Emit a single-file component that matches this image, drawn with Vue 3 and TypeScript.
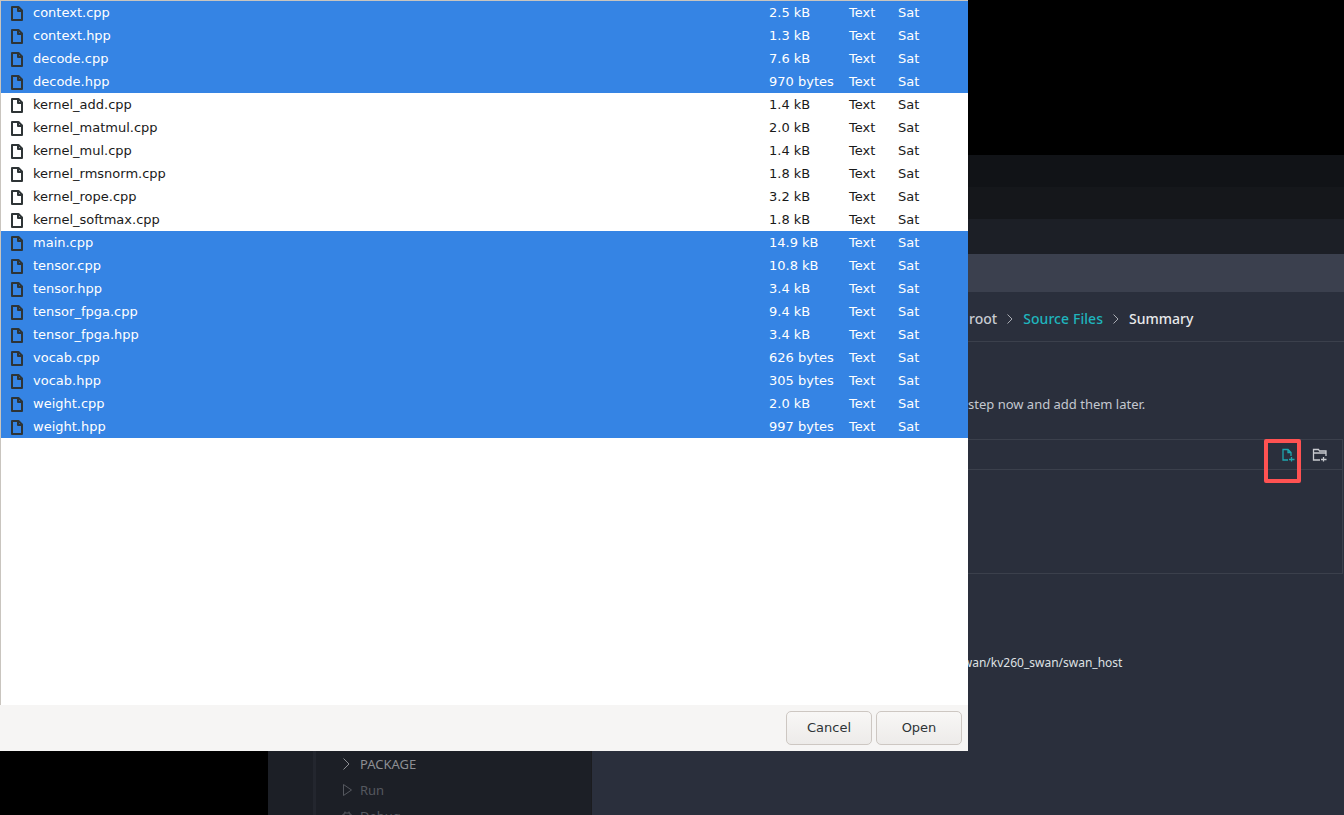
<template>
  <div class="desktop">
    <div class="ide">
      <div class="bar bar-title"></div>
      <div class="bar bar-menu"></div>
      <div class="bar bar-tabs"></div>
      <div class="bar bar-active"></div>
      <div class="ide-body">
        <aside class="sidebar">
          <div class="rail"></div>
          <div class="tree">
            <div class="tree-row heading">
              <svg width="14" height="14" viewBox="0 0 14 14" fill="none" stroke="currentColor" stroke-width="1">
                <path d="M3.500 1.500 9 7l-5.500 5.500" />
              </svg>
              PACKAGE
            </div>
            <div class="tree-row muted">
              <svg width="14" height="14" viewBox="0 0 14 14" fill="none" stroke="currentColor" stroke-width="1">
                <path d="M3.500 1.500 11.500 7l-8 5.500z" />
              </svg>
              Run
            </div>
            <div class="tree-row muted">
              <svg width="14" height="14" viewBox="0 0 14 14" fill="none" stroke="currentColor" stroke-width="1">
                <path d="M4 4h6v6a3 3 0 0 1-6 0zM5 4V2.500M9 4V2.500M2 6h2M10 6h2" />
              </svg>
              Debug
            </div>
          </div>
        </aside>
        <main class="main">
          <nav class="crumbs">
            <span>root</span>
            <svg class="chev" width="12" height="12" viewBox="0 0 12 12" fill="none" stroke="currentColor">
              <path d="M3.500 1.500 8 6l-4.500 4.500" />
            </svg>
            <span class="crumb-on">Source Files</span>
            <svg class="chev" width="12" height="12" viewBox="0 0 12 12" fill="none" stroke="currentColor">
              <path d="M3.500 1.500 8 6l-4.500 4.500" />
            </svg>
            <span class="crumb-last">Summary</span>
          </nav>
          <section class="content">
            <p class="hint">step now and add them later.</p>
            <div class="files-box">
              <div class="files-head">
                <span class="icon-btn teal">
                  <svg width="16" height="16" viewBox="0 0 16 16" fill="none" stroke="currentColor" stroke-width="1.300">
                    <path d="M8 13H3V2.500h5l3 3V9M8 2.500v3h3M11.500 10v4.500M9 12.500h5.500" />
                  </svg>
                </span>
                <span class="icon-btn">
                  <svg width="16" height="16" viewBox="0 0 16 16" fill="none" stroke="currentColor" stroke-width="1.300">
                    <path d="M8 13H1.500V2.500h5l1 1.500h6.500v5M1.500 6h12.500M11.500 10v4.500M9 12.500h5.500" />
                  </svg>
                </span>
              </div>
            </div>
            <p class="path">swan/kv260_swan/swan_host</p>
          </section>
          <div class="callout"></div>
        </main>
      </div>
    </div>

    <div class="dialog">
      <div class="file-list">
        <div v-for="f in files" :key="f.name" class="file-row" :class="{ selected: f.selected }">
          <svg class="file-icon" width="16" height="16" viewBox="0 0 16 16" fill="none" stroke="#2e3436" stroke-width="2">
            <path d="M3 2h6.500L13 5.500V15H3zM9 2v4h4" stroke-linejoin="round" />
          </svg>
          <span class="file-name">{{ f.name }}</span>
          <span class="file-size">{{ f.size }}</span>
          <span class="file-type">Text</span>
          <span class="file-date">Sat</span>
        </div>
      </div>
      <footer class="dialog-foot">
        <button class="gtk-btn">Cancel</button>
        <button class="gtk-btn">Open</button>
      </footer>
    </div>
  </div>
</template>

<script setup lang="ts">
interface FileEntry {
  name: string
  size: string
  selected: boolean
}

const row = (name: string, size: string, selected = true): FileEntry => ({ name, size, selected })

const files: FileEntry[] = [
  row('context.cpp', '2.5 kB'),
  row('context.hpp', '1.3 kB'),
  row('decode.cpp', '7.6 kB'),
  row('decode.hpp', '970 bytes'),
  row('kernel_add.cpp', '1.4 kB', false),
  row('kernel_matmul.cpp', '2.0 kB', false),
  row('kernel_mul.cpp', '1.4 kB', false),
  row('kernel_rmsnorm.cpp', '1.8 kB', false),
  row('kernel_rope.cpp', '3.2 kB', false),
  row('kernel_softmax.cpp', '1.8 kB', false),
  row('main.cpp', '14.9 kB'),
  row('tensor.cpp', '10.8 kB'),
  row('tensor.hpp', '3.4 kB'),
  row('tensor_fpga.cpp', '9.4 kB'),
  row('tensor_fpga.hpp', '3.4 kB'),
  row('vocab.cpp', '626 bytes'),
  row('vocab.hpp', '305 bytes'),
  row('weight.cpp', '2.0 kB'),
  row('weight.hpp', '997 bytes'),
]
</script>

<style>
html, body {
  margin: 0;
  background: #000;
  overflow: hidden;
}
</style>

<style scoped>
.desktop {
  position: relative;
  width: 1344px;
  height: 815px;
  background: #000;
  overflow: hidden;
}

/* IDE window behind the dialog */
.ide {
  position: absolute;
  left: 268px;
  top: 155px;
  width: 1076px;
  height: 660px;
  display: flex;
  flex-direction: column;
  font-family: 'Noto Sans', sans-serif;
  background: #2a2f3c;
}
.bar { flex: none; }
.bar-title { height: 32px; background: #111317; }
.bar-menu { height: 32px; background: #15171b; }
.bar-tabs { height: 35px; background: #1c1f26; }
.bar-active { height: 38px; background: #3b404e; }
.ide-body {
  flex: 1;
  display: flex;
  min-height: 0;
}
.sidebar {
  width: 324px;
  flex: none;
  display: flex;
  overflow: hidden;
  background: #1c1f26;
}
.rail {
  width: 45px;
  flex: none;
  border-right: 3px solid #23262e;
}
.tree {
  flex: 1;
  padding-top: 459px;
  border-right: 1px solid #1b1c1f;
}
.tree-row {
  height: 26px;
  display: flex;
  align-items: center;
  gap: 6px;
  padding-left: 24px;
  font-size: 13px;
}
.tree-row svg { flex: none; }
.heading { color: #8c8e93; }
.muted { color: #55585f; }

.main {
  position: relative;
  flex: 1;
  min-width: 0;
  overflow: hidden;
}
.crumbs {
  height: 45px;
  padding: 4px 0 0 377px;
  display: flex;
  align-items: center;
  gap: 6px;
  border-bottom: 1px solid #3b404c;
  font-size: 14px;
  font-weight: 500;
  color: #c8cbd1;
}
.chev { color: #a9acb3; flex: none; margin: 0 1px; }
.crumb-on { color: #1fb5bd; letter-spacing: 0.08px; }
.crumb-last { color: #e8e9eb; }
.content {
  padding: 54px 1px 0 376px;
}
.hint {
  margin: 0;
  height: 17px;
  line-height: 17px;
  font-size: 13px;
  color: #c4c8d0;
}
.files-box {
  margin-top: 26px;
  height: 133px;
  border: 1px solid #3b404c;
  border-left: 0;
}
.files-head {
  height: 29px;
  display: flex;
  justify-content: flex-end;
  align-items: center;
  gap: 16px;
  padding-right: 14px;
  border-bottom: 1px solid #3b404c;
  color: #c9cbd0;
}
.icon-btn { width: 16px; height: 16px; display: block; }
.icon-btn svg { display: block; }
.teal { color: #1fa6ae; }
.path {
  margin: 80px 0 0 -11px;
  font-size: 12px;
  line-height: 17px;
  color: #dfe1e4;
}
.callout {
  position: absolute;
  left: 672px;
  top: 147px;
  width: 29px;
  height: 36px;
  border: 4px solid #ff5252;
  border-radius: 2px;
}

/* File chooser dialog */
.dialog {
  position: absolute;
  left: 0;
  top: 0;
  width: 968px;
  height: 751px;
  display: flex;
  flex-direction: column;
  font-family: 'DejaVu Sans', sans-serif;
  font-size: 13px;
  background: #fff;
  color: #1a1a1a;
}
.file-list {
  flex: 1;
  border-top: 1px solid #c9c5bf;
  border-left: 1px solid #c9c5bf;
}
.file-row {
  height: 23px;
  display: grid;
  grid-template-columns: 32px 736px 80px 49px 1fr;
  align-items: center;
}
.file-row.selected {
  background: #3584e4;
  color: #fff;
}
.file-icon { margin-left: 8px; }
.dialog-foot {
  height: 46px;
  flex: none;
  display: flex;
  justify-content: flex-end;
  align-items: center;
  gap: 4px;
  padding-right: 6px;
  background: #f6f5f4;
}
.gtk-btn {
  width: 86px;
  height: 34px;
  padding: 0 0 2px;
  font: inherit;
  color: #2e3436;
  background: linear-gradient(#f8f7f6, #edebe9);
  border: 1px solid #cdc7c2;
  border-radius: 5px;
}
</style>
